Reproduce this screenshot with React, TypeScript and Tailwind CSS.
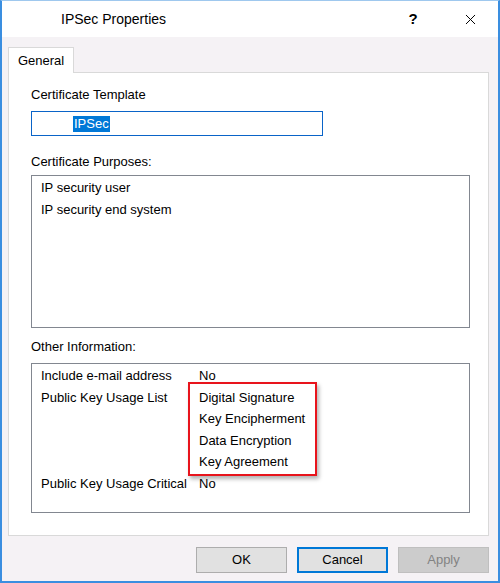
import { X } from "lucide-react";

const otherInfo: { label: string; values: string[] }[] = [
  { label: "Include e-mail address", values: ["No"] },
  {
    label: "Public Key Usage List",
    values: ["Digital Signature", "Key Encipherment", "Data Encryption", "Key Agreement"],
  },
  { label: "Public Key Usage Critical", values: ["No"] },
];

const App = () => {
  return (
    <div
      className="w-[500px] h-[583px] flex flex-col bg-[#f5f2f5] border-t border-t-[#9fc8ee] border-l-2 border-r-2 border-b-2 border-[#3a8ee0] text-[13px] text-black overflow-hidden"
      style={{ fontFamily: '"Liberation Sans", Arial, sans-serif' }}
    >
      {/* Title bar */}
      <div className="h-[36px] bg-white flex items-center shrink-0">
        <span className="pl-[59px] text-[14px] flex-1">IPSec Properties</span>
        <span className="w-[20px] text-center text-[15px] font-bold mr-[39px]">?</span>
        <X className="w-[17px] h-[17px] mr-[19px]" strokeWidth={1.4} />
      </div>

      {/* Body */}
      <div className="flex-1 flex flex-col pl-[6px] pr-[9px] pt-[10px]">
        {/* Tab */}
        <div className="flex">
          <div className="w-[66px] h-[26px] bg-white border border-b-0 border-[#d9d9d9] flex items-center justify-center -mb-px relative z-10">
            General
          </div>
        </div>

        {/* Panel */}
        <div className="h-[464px] bg-white border border-[#d9d9d9] pl-[22px] pr-[18px] pt-[14px] flex flex-col">
          <div className="leading-[16px]">Certificate Template</div>
          <div className="mt-[8px] w-[292px] h-[25px] border border-[#0a64c8] flex items-center pl-[41px]">
            <span className="bg-[#0078d7] text-white leading-[16px] px-[1px]">IPSec</span>
          </div>

          <div className="mt-[18px] leading-[16px]">Certificate Purposes:</div>
          <div className="mt-[5px] h-[153px] border border-[#828790] pl-[9px] pt-[1px] leading-[22px]">
            <div>IP security user</div>
            <div>IP security end system</div>
          </div>

          <div className="mt-[11px] leading-[16px]">Other Information:</div>
          <div className="mt-[8px] h-[150px] border border-[#828790] pl-[9px] pt-[1px] leading-[21.5px]">
            {otherInfo.map((row) => (
              <div key={row.label} className="flex">
                <div className="w-[158px]">{row.label}</div>
                <div className="relative">
                  {row.values.map((v) => (
                    <div key={v}>{v}</div>
                  ))}
                  {row.values.length > 1 && (
                    <div className="absolute left-[-11px] top-[-5px] w-[129px] h-[94px] border-2 border-[#e8141c] shadow-[2px_3px_4px_rgba(0,0,0,0.3)]" />
                  )}
                </div>
              </div>
            ))}
          </div>
        </div>

        {/* Buttons */}
        <div className="flex justify-end gap-[10px] mt-[11px]">
          <button className="w-[91px] h-[26px] bg-[#e1e1e1] border border-[#adadad]">OK</button>
          <button className="w-[91px] h-[26px] bg-[#e1e1e1] border-2 border-[#0078d7]">Cancel</button>
          <button className="w-[91px] h-[26px] bg-[#cccccc] border border-[#bfbfbf] text-[#838383]">Apply</button>
        </div>
      </div>
    </div>
  );
};

export default App;
